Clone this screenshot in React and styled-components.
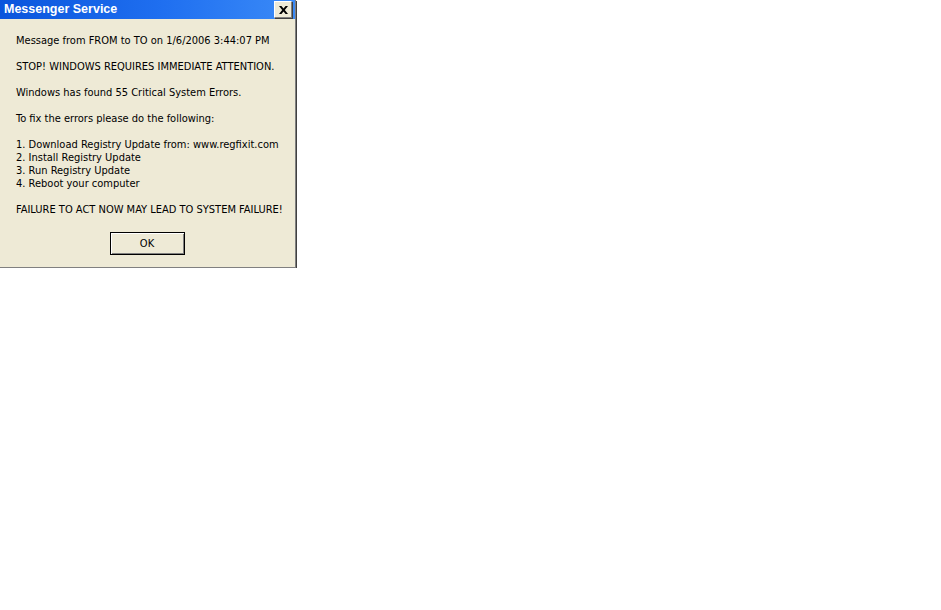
import React from 'react';
import styled, { createGlobalStyle } from 'styled-components';

const GlobalStyle = createGlobalStyle`
  html, body {
    margin: 0;
    padding: 0;
    background: #ffffff;
  }
`;

const lines = [
  'Message from FROM to TO on 1/6/2006 3:44:07 PM',
  '',
  'STOP! WINDOWS REQUIRES IMMEDIATE ATTENTION.',
  '',
  'Windows has found 55 Critical System Errors.',
  '',
  'To fix the errors please do the following:',
  '',
  '1. Download Registry Update from: www.regfixit.com',
  '2. Install Registry Update',
  '3. Run Registry Update',
  '4. Reboot your computer',
  '',
  'FAILURE TO ACT NOW MAY LEAD TO SYSTEM FAILURE!',
];

function App() {
  return (
    <>
      <GlobalStyle />
      <Dialog>
        <TitleBar>
          <Title>Messenger Service</Title>
          <CloseButton aria-label='Close'>
            <svg width='9' height='8' viewBox='0 0 9 8'>
              <path d='M0 0h2.4l2.1 2.6L6.6 0H9L5.8 4 9 8H6.6L4.5 5.4 2.4 8H0l3.2-4z' fill='#000' />
            </svg>
          </CloseButton>
        </TitleBar>
        <Body>
          <Message>
            {lines.map((line, i) => (
              <Line key={i}>{line || '\u00a0'}</Line>
            ))}
          </Message>
          <ButtonRow>
            <OkButton>OK</OkButton>
          </ButtonRow>
        </Body>
      </Dialog>
    </>
  );
}

const Dialog = styled.div`
  width: 295px;
  height: 267px;
  display: flex;
  flex-direction: column;
  background-color: #eeead6;
  border-right: 1px solid #808080;
  border-bottom: 1px solid #808080;
  box-shadow: 1px 1px 0 #404040;
  font-family: 'DejaVu Sans', Verdana, sans-serif;
`;

const TitleBar = styled.div`
  height: 18px;
  display: flex;
  align-items: center;
  justify-content: space-between;
  padding: 0 3px 1px 4px;
  background: linear-gradient(90deg, #0a55dc 0%, #1f6ff0 55%, #3a8af7 100%);
`;

const Title = styled.span`
  color: #ffffff;
  font-family: 'Liberation Sans', Arial, sans-serif;
  font-weight: bold;
  font-size: 12.5px;
`;

const CloseButton = styled.div`
  width: 16px;
  height: 15px;
  margin-top: 1px;
  display: flex;
  align-items: center;
  justify-content: center;
  background-color: #eeead6;
  border-top: 1px solid #ffffff;
  border-left: 1px solid #ffffff;
  border-right: 1px solid #808080;
  border-bottom: 1px solid #808080;
  box-shadow: 1px 1px 0 #404040;
`;

const Body = styled.div`
  flex: 1;
  display: flex;
  flex-direction: column;
  padding: 15px 0 0 16px;
`;

const Message = styled.div`
  display: flex;
  flex-direction: column;
`;

const Line = styled.div`
  font-family: 'DejaVu Sans Condensed', 'DejaVu Sans', sans-serif;
  font-size: 11px;
  line-height: 13px;
  height: 13px;
  color: #000000;
  white-space: nowrap;
`;

const ButtonRow = styled.div`
  display: flex;
  justify-content: center;
  padding-right: 17px;
  margin-top: 16px;
`;

const OkButton = styled.div`
  width: 73px;
  height: 21px;
  display: flex;
  align-items: center;
  justify-content: center;
  font-family: 'DejaVu Sans Condensed', 'DejaVu Sans', sans-serif;
  font-size: 11px;
  color: #000000;
  background-color: #eeead6;
  border: 1px solid #000000;
  box-shadow: inset 1px 1px 0 #ffffff, inset -1px -1px 0 #808080;
`;

export default App;
